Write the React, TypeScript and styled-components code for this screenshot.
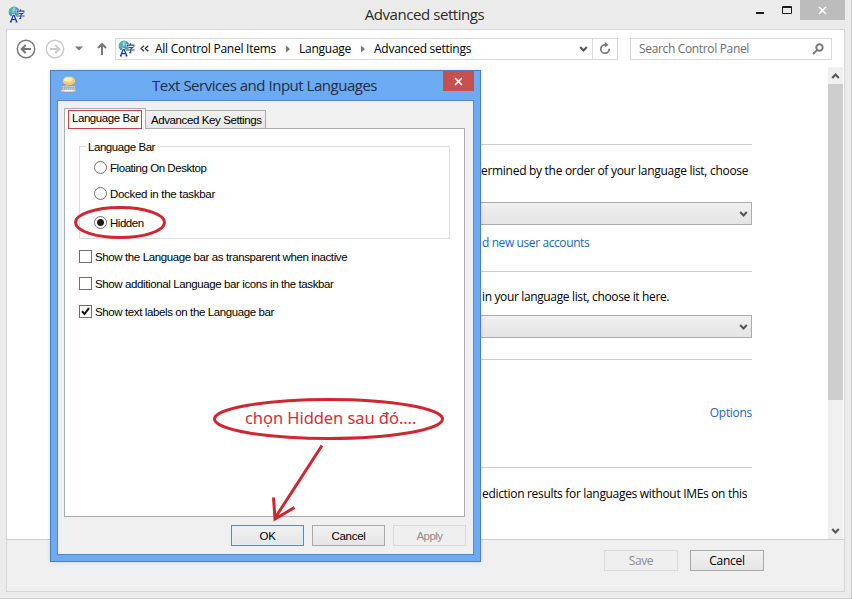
import React from 'react';
import styled, { createGlobalStyle } from 'styled-components';

const Global = createGlobalStyle`
  * { box-sizing: border-box; }
  html, body { margin: 0; height: 100%; overflow: hidden; }
  body { font: 12px/16px "Open Sans", "Noto Sans", sans-serif; color: #000; }
  svg { display: block; flex: none; }
`;

const Window = styled.div`
  position: relative;
  width: 852px;
  height: 599px;
  display: flex;
  flex-direction: column;
  padding: 0 6px 6px;
  background: #ebebeb;
  border-right: 1px solid #cacaca;
  border-bottom: 1px solid #cacaca;
`;

const TitleBar = styled.header`
  height: 29px;
  flex: none;
  display: grid;
  grid-template-columns: 118px 1fr 120px;
  align-items: start;
`;

const TitleIcon = styled.div`
  padding: 6px 0 0 2px;
`;

const WindowTitle = styled.h1`
  margin: 0;
  padding: 3px 0 0;
  text-align: center;
  font-size: 15px;
  line-height: 22px;
  font-weight: 400;
  letter-spacing: -0.43px;
  color: #2b2b2b;
`;

const Controls = styled.div`
  display: flex;
  justify-content: flex-end;
  height: 20px;
`;

const CloseBox = styled.div`
  width: 45px;
  height: 20px;
  display: grid;
  place-items: center;
  background: #bcbcbc;
`;

const Client = styled.div`
  flex: 1;
  width: 839px;
  display: flex;
  flex-direction: column;
  min-height: 0;
  background: #fff;
  border: 1px solid #d6d6d6;
`;

const NavBar = styled.nav`
  height: 37px;
  flex: none;
  display: flex;
  align-items: center;
  padding: 0 12px 0 9px;
`;

const Address = styled.div`
  display: flex;
  align-items: center;
  margin-left: 8px;
  width: 503px;
  height: 22px;
  border: 1px solid #d9d9d9;
`;

const Crumb = styled.span<{ $ls: number; $left: number }>`
  letter-spacing: ${p => p.$ls}px;
  margin-left: ${p => p.$left}px;
  white-space: nowrap;
`;

const Spacer = styled.div`
  flex: 1;
`;

const Refresh = styled.div`
  width: 25px;
  height: 20px;
  margin-left: 4px;
  display: grid;
  place-items: center;
  border-left: 1px solid #d9d9d9;
`;

const Search = styled.div`
  display: flex;
  align-items: center;
  justify-content: space-between;
  margin-left: 12px;
  width: 202px;
  height: 22px;
  padding: 0 7px 0 8px;
  border: 1px solid #d9d9d9;
  color: #6d6d6d;
  letter-spacing: -0.34px;
`;

const Body = styled.div`
  flex: 1;
  min-height: 0;
  display: flex;
  justify-content: space-between;
`;

const Settings = styled.main`
  width: 275px;
  margin-left: 470px;
  padding-top: 77px;
  display: flex;
  flex-direction: column;
`;

const Section = styled.section<{ $h: number }>`
  height: ${p => p.$h}px;
  border-top: 1px solid #cdcdcd;
  display: flex;
  flex-direction: column;
`;

const Line = styled.p<{ $ls: number; $top: number; $left?: number }>`
  margin: ${p => p.$top}px 0 0 ${p => p.$left ?? 0}px;
  line-height: 16px;
  letter-spacing: ${p => p.$ls}px;
  white-space: nowrap;
`;

const LinkLine = styled(Line)`
  color: #1c66b4;
`;

const OptionsLink = styled(LinkLine)`
  text-align: right;
`;

const Select = styled.div<{ $top: number }>`
  height: 23px;
  margin-top: ${p => p.$top}px;
  display: flex;
  align-items: center;
  justify-content: flex-end;
  padding-right: 3px;
  border: 1px solid #acacac;
  background: linear-gradient(#f0f0f0, #e4e4e4);
`;

const ScrollBar = styled.div`
  width: 15px;
  margin: 0 1px 0 0;
  display: flex;
  flex-direction: column;
  background: #f0f0f0;
`;

const ScrollButton = styled.div`
  height: 17px;
  display: grid;
  place-items: center;
`;

const Thumb = styled.div`
  height: 316px;
  background: #cdcdcd;
`;

const Footer = styled.footer`
  height: 52px;
  flex: none;
  display: flex;
  justify-content: flex-end;
  gap: 12px;
  padding: 10px 80px 0 0;
  background: #f0f0f0;
  border-top: 1px solid #cbcbcb;
`;

type Kind = 'normal' | 'default' | 'disabled';

const Button = styled.button<{ $kind: Kind; $w: number; $ls: number }>`
  width: ${p => p.$w}px;
  height: 21px;
  padding: 1px 0 0;
  font: inherit;
  line-height: 18px;
  letter-spacing: ${p => p.$ls}px;
  color: ${p => (p.$kind === 'disabled' ? '#8c8c8c' : '#000')};
  background: ${p => (p.$kind === 'disabled' ? '#efefef' : 'linear-gradient(#f1f1f1, #e5e5e5)')};
  border: 1px solid ${p => (p.$kind === 'default' ? '#4590d0' : p.$kind === 'disabled' ? '#d9d9d9' : '#a9a9a9')};
  box-shadow: ${p => (p.$kind === 'default' ? 'inset 0 0 0 1px #d9f2fb' : 'none')};
`;

const Dialog = styled.div`
  position: absolute;
  left: 50px;
  top: 70px;
  width: 431px;
  height: 492px;
  padding: 0 6px 6px;
  display: flex;
  flex-direction: column;
  background: #6caaf2;
  border: 1px solid #4c80bb;
  box-shadow: 0 0 4px rgba(0, 0, 0, 0.14);
`;

const DialogHeader = styled.div`
  height: 29px;
  flex: none;
  display: grid;
  grid-template-columns: 32px 1fr 31px;
  align-items: start;
`;

const DialogIcon = styled.div`
  padding: 5px 0 0 3px;
`;

const DialogTitle = styled.h2`
  margin: 0;
  padding: 3px 0 0 63px;
  font-size: 15px;
  line-height: 22px;
  font-weight: 400;
  letter-spacing: -0.48px;
  color: #1d3047;
  white-space: nowrap;
`;

const DialogClose = styled.div`
  height: 20px;
  display: grid;
  place-items: center;
  background: #c84f50;
`;

const DialogBody = styled.div`
  flex: 1;
  display: flex;
  flex-direction: column;
  padding: 7px 7px 8px 6px;
  background: #f0f0f0;
  border: 1px solid #5489c6;
  font: 11.5px/14px "Liberation Sans", Arial, sans-serif;
`;

const Tabs = styled.div`
  height: 20px;
  display: flex;
  align-items: flex-end;
`;

const Tab = styled.div<{ $active?: boolean; $ls: number }>`
  position: relative;
  z-index: ${p => (p.$active ? 1 : 0)};
  width: ${p => (p.$active ? 82 : 120)}px;
  height: ${p => (p.$active ? 21 : 18)}px;
  margin-bottom: ${p => (p.$active ? -1 : 0)}px;
  padding: ${p => (p.$active ? '2px 3px 0' : '2px 0 0 5px')};
  border: 1px solid #acacac;
  border-bottom: 0;
  border-left-width: ${p => (p.$active ? 1 : 0)}px;
  background: ${p => (p.$active ? '#fff' : 'linear-gradient(#f1f1f1, #e6e6e6)')};
  letter-spacing: ${p => p.$ls}px;
  white-space: nowrap;
`;

const TabMark = styled.div`
  width: 74px;
  height: 19px;
  margin-top: -1px;
  padding: 0 0 0 3px;
  border: 1px solid #cb4049;
`;

const Panel = styled.div`
  width: 401px;
  height: 389px;
  padding: 10px 14px 0;
  background: #fff;
  border: 1px solid #acacac;
`;

const Group = styled.fieldset`
  margin: 0;
  padding: 0 0 0 14px;
  width: 371px;
  height: 100px;
  border: 1px solid #dcdcdc;
`;

const Legend = styled.legend`
  margin-left: -8px;
  padding: 1px 5px 0 2px;
  height: 14px;
  letter-spacing: -0.44px;
`;

const Choice = styled.div<{ $top: number; $ls: number }>`
  display: flex;
  align-items: center;
  gap: 3px;
  height: 14px;
  margin-top: ${p => p.$top}px;
  letter-spacing: ${p => p.$ls}px;
  white-space: nowrap;
`;

const ChoiceText = styled.span`
  padding-top: 1px;
`;

const RadioDot = styled.span<{ $on?: boolean }>`
  width: 13px;
  height: 13px;
  flex: none;
  border-radius: 50%;
  border: 1px solid #6f6f6f;
  background: ${p => (p.$on ? 'radial-gradient(circle, #1c1c1c 3px, #fff 4px)' : '#fff')};
`;

const Box = styled.span`
  width: 13px;
  height: 13px;
  flex: none;
  border: 1px solid #6f6f6f;
  background: #fff;
`;

const Actions = styled.div`
  display: flex;
  gap: 8px;
  margin: 8px 0 0 167px;
`;

const Markup = styled.svg`
  position: absolute;
  left: 0;
  top: 0;
  pointer-events: none;
`;

const Note = styled.div`
  position: absolute;
  left: 245px;
  top: 407px;
  font-family: "Noto Sans", "Open Sans", sans-serif;
  font-size: 16.5px;
  line-height: 22px;
  letter-spacing: -0.06px;
  color: #cf2f3b;
  white-space: nowrap;
`;

const LETTER_A = 'M2.700 15.800 5.200 9.300h.9l2.700 6.500M3.600 13.600h4.200M1.900 15.900h2M7.500 15.900h2';
const HANZI = 'M12.500 3.300v1.500M9.200 6.800V5.100h6.700v1.700M10.500 7.500h4l-1.900 1.600M8.800 10h7.800M12.700 9.300v3.300h-1.500';

const LanguageIcon = () => (
  <svg width="18" height="18" viewBox="0 0 18 18" fill="none">
    <defs>
      <radialGradient id="globe" cx="0.35" cy="0.3" r="0.8">
        <stop offset="0" stopColor="#c9f2fb" />
        <stop offset="0.5" stopColor="#3fa3cf" />
        <stop offset="1" stopColor="#17589c" />
      </radialGradient>
    </defs>
    <circle cx="6" cy="5.800" r="5.400" fill="url(#globe)" />
    <path d="M1 4c1-2 3-3.200 5-3.300L4.500 3.200 5 5 2.500 7.500zM7 6l3-1.500 1.500 2L9 10z" fill="#55b583" />
    <path d={LETTER_A} stroke="#fff" strokeWidth="2.400" />
    <path d={HANZI} stroke="#f4f8fc" strokeWidth="2.200" />
    <path d={LETTER_A} stroke="#173a9c" strokeWidth="1.300" />
    <path d={HANZI} stroke="#2443a4" strokeWidth="1.100" />
  </svg>
);

const KeyboardIcon = () => (
  <svg width="17" height="17" viewBox="0 0 17 17">
    <path d="M1.500 9.500h14l.6 6.500H.8z" fill="#d5dce2" stroke="#8e9ba8" strokeWidth=".8" />
    <path d="M2 11.200h13M1.800 13h13.400" stroke="#72808e" strokeWidth="1" strokeDasharray="1.300 .8" />
    <path d="M4 14.800h9" stroke="#fff" strokeWidth="1" />
    <ellipse cx="9" cy="4.800" rx="6.300" ry="4.300" fill="#f5cd6b" />
    <ellipse cx="8.300" cy="3.400" rx="4.300" ry="2.200" fill="#fdeeb9" />
    <path d="M6 8 5 11l4-2.300z" fill="#eebb52" />
  </svg>
);

const NavArrow = ({ color, flip }: { color: string; flip?: boolean }) => (
  <svg width="20" height="20" viewBox="0 0 20 20" fill="none" stroke={color}>
    <circle cx="10" cy="10" r="8.700" strokeWidth="1.400" />
    <path d={flip ? 'M5 10h9M10.300 6l4 4-4 4' : 'M15 10H6M9.700 6l-4 4 4 4'} strokeWidth="2" />
  </svg>
);

const Chevron = ({ up }: { up?: boolean }) => (
  <svg width="9" height="8" viewBox="0 0 9 8" fill="none" stroke="#555" strokeWidth="2">
    <path d={up ? 'M1.200 6 4.500 2.500 7.800 6' : 'M1.200 2 4.500 5.500 7.800 2'} />
  </svg>
);

const Cross = () => (
  <svg width="9" height="9" viewBox="0 0 9 9" stroke="#fff" strokeWidth="1.700">
    <path d="M1 1l7 7M8 1 1 8" />
  </svg>
);

const CrumbArrow = styled(({ className }: { className?: string }) => (
  <svg className={className} width="4" height="8" viewBox="0 0 4 8">
    <path d="M0 .5 4 4 0 7.500z" fill="#777" />
  </svg>
))`
  margin-left: 10px;
`;

const NavGlyph = styled.div<{ $left: number }>`
  margin-left: ${p => p.$left}px;
`;

export default function App() {
  return (
    <Window>
      <Global />
      <TitleBar>
        <TitleIcon><LanguageIcon /></TitleIcon>
        <WindowTitle>Advanced settings</WindowTitle>
        <Controls>
          <svg width="45" height="20" viewBox="0 0 45 20">
            <path d="M1 13h8" stroke="#1b1b1b" strokeWidth="2" />
            <path d="M27.500 6.500h9v7h-9zM27 7.500h10" fill="none" stroke="#1b1b1b" />
          </svg>
          <CloseBox><Cross /></CloseBox>
        </Controls>
      </TitleBar>

      <Client>
        <NavBar>
          <NavGlyph $left={0}><NavArrow color="#747474" /></NavGlyph>
          <NavGlyph $left={9}><NavArrow color="#c9c9c9" flip /></NavGlyph>
          <NavGlyph $left={10}>
            <svg width="8" height="5" viewBox="0 0 8 5"><path d="M0 .5h8L4 4.500z" fill="#777" /></svg>
          </NavGlyph>
          <NavGlyph $left={14}>
            <svg width="10" height="13" viewBox="0 0 10 13" fill="none" stroke="#777" strokeWidth="2">
              <path d="M5 13V2M1 6l4-4 4 4" />
            </svg>
          </NavGlyph>
          <Address>
            <NavGlyph $left={2}><LanguageIcon /></NavGlyph>
            <NavGlyph $left={4}>
              <svg width="9" height="7" viewBox="0 0 9 7" fill="none" stroke="#333" strokeWidth="1.300">
                <path d="M4 .7 1 3.500l3 2.800M8.300 .7l-3 2.800 3 2.800" />
              </svg>
            </NavGlyph>
            <Crumb $ls={-0.25} $left={6}>All Control Panel Items</Crumb>
            <CrumbArrow />
            <Crumb $ls={-0.26} $left={9}>Language</Crumb>
            <CrumbArrow />
            <Crumb $ls={-0.26} $left={9}>Advanced settings</Crumb>
            <Spacer />
            <Chevron />
            <Refresh>
              <svg width="12" height="13" viewBox="0 0 12 13" fill="none" stroke="#777" strokeWidth="1.700">
                <path d="M6.500 2.800H5.800A4.200 4.200 0 1 0 10.200 6.800" />
                <path d="M5.800 0v5.600L9.500 2.800z" fill="#777" stroke="none" />
              </svg>
            </Refresh>
          </Address>
          <Search>
            Search Control Panel
            <svg width="12" height="12" viewBox="0 0 12 12" fill="none" stroke="#777" strokeWidth="1.900">
              <circle cx="7.500" cy="4.500" r="3.200" />
              <path d="M5.200 6.800 1 11" />
            </svg>
          </Search>
        </NavBar>

        <Body>
          <Settings>
            <Section $h={127}>
              <Line $ls={-0.29} $top={18}>termined by the order of your language list, choose</Line>
              <Select $top={23}><Chevron /></Select>
              <LinkLine $ls={-0.4} $top={10} $left={5}>d new user accounts</LinkLine>
            </Section>
            <Section $h={88}>
              <Line $ls={-0.36} $top={17} $left={5}>in your language list, choose it here.</Line>
              <Select $top={10}><Chevron /></Select>
            </Section>
            <Section $h={108}>
              <OptionsLink $ls={-0.3} $top={45}>Options</OptionsLink>
            </Section>
            <Section $h={72}>
              <Line $ls={-0.32} $top={18} $left={5}>ediction results for languages without IMEs on this</Line>
            </Section>
          </Settings>
          <ScrollBar>
            <ScrollButton><Chevron up /></ScrollButton>
            <Thumb />
            <Spacer />
            <ScrollButton><Chevron /></ScrollButton>
          </ScrollBar>
        </Body>

        <Footer>
          <Button $kind="disabled" $w={74} $ls={-0.37}>Save</Button>
          <Button $kind="normal" $w={74} $ls={-0.27}>Cancel</Button>
        </Footer>
      </Client>

      <Dialog>
        <DialogHeader>
          <DialogIcon><KeyboardIcon /></DialogIcon>
          <DialogTitle>Text Services and Input Languages</DialogTitle>
          <DialogClose><Cross /></DialogClose>
        </DialogHeader>
        <DialogBody>
          <Tabs>
            <Tab $active $ls={-0.44}><TabMark>Language Bar</TabMark></Tab>
            <Tab $ls={-0.4}>Advanced Key Settings</Tab>
          </Tabs>
          <Panel>
            <Group>
              <Legend>Language Bar</Legend>
              <Choice $top={7} $ls={-0.44}><RadioDot /><ChoiceText>Floating On Desktop</ChoiceText></Choice>
              <Choice $top={12} $ls={-0.3}><RadioDot /><ChoiceText>Docked in the taskbar</ChoiceText></Choice>
              <Choice $top={15} $ls={-0.48}><RadioDot $on /><ChoiceText>Hidden</ChoiceText></Choice>
            </Group>
            <Choice $top={10} $ls={-0.39}><Box /><ChoiceText>Show the Language bar as transparent when inactive</ChoiceText></Choice>
            <Choice $top={13} $ls={-0.39}><Box /><ChoiceText>Show additional Language bar icons in the taskbar</ChoiceText></Choice>
            <Choice $top={14} $ls={-0.39}>
              <Box>
                <svg width="11" height="11" viewBox="0 0 11 11" fill="none" stroke="#111" strokeWidth="2">
                  <path d="M2 5.300 4.500 8 9 2.200" />
                </svg>
              </Box>
              <ChoiceText>Show text labels on the Language bar</ChoiceText>
            </Choice>
          </Panel>
          <Actions>
            <Button $kind="default" $w={73} $ls={-0.3}>OK</Button>
            <Button $kind="normal" $w={73} $ls={-0.3}>Cancel</Button>
            <Button $kind="disabled" $w={73} $ls={-0.55}>Apply</Button>
          </Actions>
        </DialogBody>
      </Dialog>

      <Markup width="852" height="599" viewBox="0 0 852 599" fill="none" stroke="#cf2630" strokeWidth="3">
        <ellipse cx="120" cy="222.500" rx="44.500" ry="15" />
        <ellipse cx="328.500" cy="419" rx="114" ry="19.500" />
        <path d="M322 445.500 275 518M273.500 497.500 275 519l19.500-11.500" />
      </Markup>
      <Note>chọn Hidden sau đó....</Note>
    </Window>
  );
}
